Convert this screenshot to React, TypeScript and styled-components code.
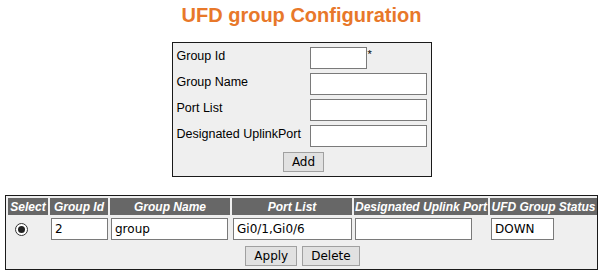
import styled, { createGlobalStyle } from "styled-components";

const GlobalStyle = createGlobalStyle`
  body {
    margin: 0;
    background: #ffffff;
    font-family: "Liberation Sans", Arial, sans-serif;
  }
`;

const Page = styled.div`
  width: 603px;
  display: flex;
  flex-direction: column;
  align-items: center;
`;

const Title = styled.h1`
  margin: 2px 0 0 0;
  height: 40px;
  font-size: 20px;
  font-weight: bold;
  color: #e8782a;
  line-height: 26px;
`;

const FormBox = styled.div`
  box-sizing: border-box;
  width: 260px;
  height: 135px;
  border: 1px solid #1a1a1a;
  background: #efefef;
  padding: 4px 0 0 4px;
  display: grid;
  grid-template-columns: 133px auto;
  grid-auto-rows: 26px;
  align-items: start;
`;

const Label = styled.div`
  font-size: 12.5px;
  color: #000;
  padding-top: 2px;
`;

const FieldCell = styled.div`
  display: flex;
  align-items: flex-start;
`;

const TextInput = styled.input<{ $w: number }>`
  box-sizing: border-box;
  width: ${(p) => p.$w}px;
  height: 22px;
  border: 1px solid #7a7a7a;
  background: #fff;
  padding: 0 3px;
  font-family: "DejaVu Sans", Tahoma, sans-serif;
  font-size: 12px;
  color: #000;
  outline: none;
`;

const Star = styled.span`
  font-size: 11px;
  margin-left: 1px;
  line-height: 14px;
`;

const ButtonRow = styled.div`
  grid-column: 1 / 3;
  display: flex;
  justify-content: center;
  gap: 5px;
  padding-top: 1px;
`;

const Button = styled.button`
  box-sizing: border-box;
  height: 20px;
  padding: 0 8px;
  border: 1px solid #a0a0a0;
  background: #e1e1e1;
  font-family: "DejaVu Sans", Tahoma, sans-serif;
  font-size: 12px;
  color: #000;
`;

const TableBox = styled.div`
  box-sizing: border-box;
  margin-top: 18px;
  width: 593px;
  border: 1px solid #1a1a1a;
  background: #efefef;
`;

const Table = styled.table`
  border-collapse: separate;
  border-spacing: 2px;
  width: 100%;
  table-layout: fixed;
`;

const Col = styled.col<{ $w: number }>`
  width: ${(p) => p.$w}px;
`;

const Th = styled.th`
  height: 17px;
  padding: 0;
  background: #676767;
  color: #fff;
  font-size: 12px;
  font-style: italic;
  font-weight: bold;
  text-align: center;
  white-space: nowrap;
`;

const Td = styled.td`
  padding: 1px 0 0 1px;
  height: 22px;
`;

const Radio = styled.span`
  display: block;
  margin-left: 6px;
  box-sizing: border-box;
  width: 13px;
  height: 13px;
  border-radius: 50%;
  border: 1px solid #333;
  background: #fff;
  position: relative;
  &::after {
    content: "";
    position: absolute;
    left: 2px;
    top: 2px;
    width: 7px;
    height: 7px;
    border-radius: 50%;
    background: #222;
  }
`;

const Footer = styled.td`
  padding: 3px 0 1px 0;
`;

export default function App() {
  return (
    <Page>
      <GlobalStyle />
      <Title>UFD group Configuration</Title>
      <FormBox>
        <Label>Group Id</Label>
        <FieldCell>
          <TextInput $w={57} />
          <Star>*</Star>
        </FieldCell>
        <Label>Group Name</Label>
        <FieldCell>
          <TextInput $w={117} />
        </FieldCell>
        <Label>Port List</Label>
        <FieldCell>
          <TextInput $w={117} />
        </FieldCell>
        <Label>Designated UplinkPort</Label>
        <FieldCell>
          <TextInput $w={117} />
        </FieldCell>
        <ButtonRow>
          <Button>Add</Button>
        </ButtonRow>
      </FormBox>
      <TableBox>
        <Table>
          <colgroup>
            <Col $w={40} />
            <Col $w={58} />
            <Col $w={120} />
            <Col $w={120} />
            <Col $w={134} />
            <Col $w={107} />
          </colgroup>
          <thead>
            <tr>
              <Th>Select</Th>
              <Th>Group Id</Th>
              <Th>Group Name</Th>
              <Th>Port List</Th>
              <Th>Designated Uplink Port</Th>
              <Th>UFD Group Status</Th>
            </tr>
          </thead>
          <tbody>
            <tr>
              <Td>
                <Radio />
              </Td>
              <Td>
                <TextInput $w={57} defaultValue="2" />
              </Td>
              <Td>
                <TextInput $w={117} defaultValue="group" />
              </Td>
              <Td>
                <TextInput $w={119} defaultValue="Gi0/1,Gi0/6" />
              </Td>
              <Td>
                <TextInput $w={117} />
              </Td>
              <Td>
                <TextInput $w={63} defaultValue="DOWN" />
              </Td>
            </tr>
            <tr>
              <Footer colSpan={6}>
                <ButtonRow>
                  <Button>Apply</Button>
                  <Button>Delete</Button>
                </ButtonRow>
              </Footer>
            </tr>
          </tbody>
        </Table>
      </TableBox>
    </Page>
  );
}
